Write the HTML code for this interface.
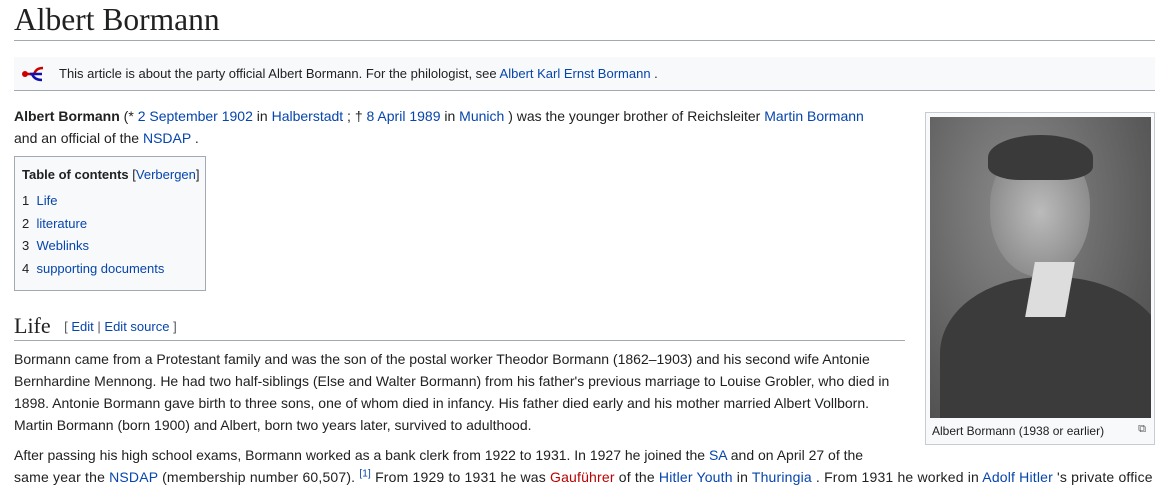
<!DOCTYPE html>
<html><head><meta charset="utf-8"><style>
body{margin:0;background:#fff;font-family:"Liberation Sans",sans-serif;color:#202122;font-size:14px;}
a{color:#0645ad;text-decoration:none}
.red{color:#ba0000}
h1{position:absolute;left:14px;top:0;margin:0;font-family:"Liberation Serif",serif;font-weight:normal;font-size:31.5px;line-height:40px;width:1141px;border-bottom:1px solid #a2a9b1;}
.hat{position:absolute;left:14px;top:57px;width:1141px;height:33px;background:#f8f9fa;border-bottom:1px solid #a2a9b1;font-size:13px;line-height:33px;}
.hat span{position:absolute;left:45px}
p{margin:0;line-height:22px}
.thumb{position:absolute;left:925px;top:112px;width:228px;height:331px;border:1px solid #c8ccd1;background:#f8f9fa}
.img{position:absolute;left:4px;top:4px;width:221px;height:301px;overflow:hidden;background:radial-gradient(ellipse at 40% 30%,#8a8a8a,#5a5a5a 70%,#4a4a4a)}
.cap{position:absolute;left:6px;top:309px;font-size:12px;line-height:18px}
.toc{position:absolute;left:14px;top:156px;width:190px;height:133px;border:1px solid #a2a9b1;background:#f8f9fa;font-size:13px}
.toc div{position:absolute;left:7px}
h2{position:absolute;left:14px;top:312px;margin:0;width:891px;border-bottom:1px solid #a2a9b1;font-family:"Liberation Serif",serif;font-weight:normal;font-size:22px;line-height:28px;height:28px}
h2 small{font-family:"Liberation Sans",sans-serif;font-size:13px;color:#54595d;margin-left:8px;vertical-align:2px}
</style></head><body>
<h1>Albert Bormann</h1>
<div class="hat"><svg style="position:absolute;left:6px;top:8px" width="26" height="18" viewBox="0 0 26 18"><path d="M4 9H14" stroke="#c00" stroke-width="2.5"/><path d="M14 9C16 4 19 3 23 3" stroke="#c00" stroke-width="2.5" fill="none"/><circle cx="5" cy="9" r="3" fill="#c00"/><path d="M10 9H22M12 9C14 14 18 15 22 15" stroke="#11a" stroke-width="2.5" fill="none"/></svg><span>This article is about the party official Albert Bormann. For the philologist, see <a>Albert Karl Ernst Bormann</a> .</span></div>
<div style="position:absolute;left:14px;top:105px;width:870px"><p><b>Albert Bormann</b> (* <a>2 September 1902</a> in <a>Halberstadt</a> ; † <a>8 April 1989</a> in <a>Munich</a> ) was the younger brother of Reichsleiter <a>Martin Bormann</a> and an official of the <a>NSDAP</a> .</p></div>
<div class="thumb"><div class="img">
<div style="position:absolute;left:60px;top:30px;width:100px;height:130px;border-radius:45% 45% 50% 50%;background:radial-gradient(ellipse at 50% 50%,#bbb,#888 80%)"></div>
<div style="position:absolute;left:58px;top:18px;width:105px;height:45px;border-radius:50% 50% 30% 30%;background:#3a3a3a"></div>
<div style="position:absolute;left:10px;top:160px;width:230px;height:170px;border-radius:45% 50% 0 0;background:#3b3b3b"></div>
<div style="position:absolute;left:100px;top:145px;width:40px;height:55px;background:#ddd;transform:skewX(-10deg)"></div>
</div><div class="cap">Albert Bormann (1938 or earlier)</div><div style="position:absolute;right:8px;top:310px;font-size:11px;color:#555">⧉</div></div>
<div class="toc">
<div style="top:10px"><b>Table of contents</b> [<a>Verbergen</a>]</div>
<div style="top:36px">1 &nbsp;<a>Life</a></div>
<div style="top:59px">2 &nbsp;<a>literature</a></div>
<div style="top:81px">3 &nbsp;<a>Weblinks</a></div>
<div style="top:104px">4 &nbsp;<a>supporting documents</a></div>
</div>
<h2>Life <small>[ <a>Edit</a> | <a>Edit source</a> ]</small></h2>
<div style="position:absolute;left:14px;top:348px;width:895px">
<p>Bormann came from a Protestant family and was the son of the postal worker Theodor Bormann (1862–1903) and his second wife Antonie Bernhardine Mennong. He had two half-siblings (Else and Walter Bormann) from his father's previous marriage to Louise Grobler, who died in 1898. Antonie Bormann gave birth to three sons, one of whom died in infancy. His father died early and his mother married Albert Vollborn. Martin Bormann (born 1900) and Albert, born two years later, survived to adulthood.</p>
</div>
<div style="position:absolute;left:14px;top:444px;width:1145px">
<p style="width:880px">After passing his high school exams, Bormann worked as a bank clerk from 1922 to 1931. In 1927 he joined the <a>SA</a> and on April 27 of the</p>
<p style="white-space:nowrap;letter-spacing:0.18px">same year the <a>NSDAP</a> (membership number 60,507). <sup style="font-size:10px;line-height:0"><a>[1]</a></sup> From 1929 to 1931 he was <a class="red">Gauführer</a> of the <a>Hitler Youth</a> in <a>Thuringia</a> . From 1931 he worked in <a>Adolf Hitler</a> 's private office</p>
</div>
</body></html>
